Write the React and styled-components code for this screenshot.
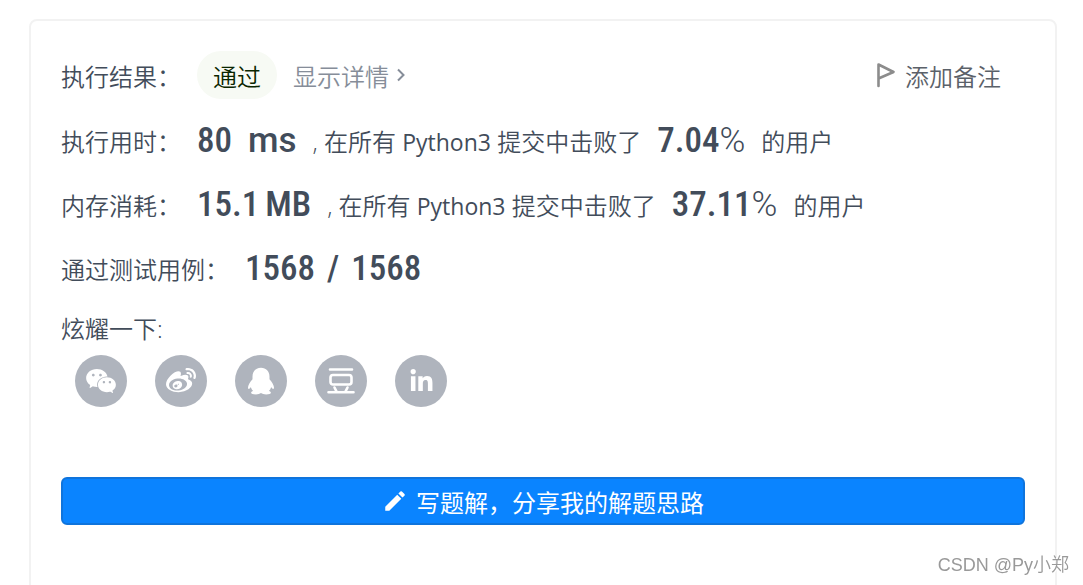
import React from "react";
import styled, { createGlobalStyle } from "styled-components";
import { AiFillWechat } from "react-icons/ai";
import { FaWeibo, FaLinkedinIn } from "react-icons/fa";
import { MdEdit } from "react-icons/md";

const GlobalStyle = createGlobalStyle`
    * {
        box-sizing: border-box;
    }

    body {
        margin: 0;
        background: #fff;
        color: #424c5a;
        font-family: "Open Sans", "Noto Sans CJK SC", sans-serif;
        font-size: 24px;
        font-weight: 350;
        overflow: hidden;
    }
`

const Card = styled.main`
    margin: 19px 26px 0 29px;
    padding: 30px 30px 80px;
    border: 2px solid #f2f2f2;
    border-radius: 8px;
`

const Header = styled.div`
    display: flex;
    align-items: center;
    height: 48px;
    margin-bottom: 11px;
`

const Label = styled.span`
    margin-right: 16px;
`

const Status = styled.span`
    padding: 4px 16px 0;
    border-radius: 24px;
    background: #f7faf4;
    color: #0a2600;
    line-height: 44px;
`

const DetailLink = styled.a`
    display: flex;
    align-items: center;
    gap: 8px;
    margin-left: 16px;
    color: #868d99;
    text-decoration: none;
`

const NoteButton = styled.button`
    display: flex;
    align-items: center;
    gap: 8px;
    margin-left: auto;
    padding: 0 24px 0 0;
    border: 0;
    background: none;
    color: #5b6169;
    font: inherit;
    cursor: pointer;
`

const Row = styled.p`
    display: flex;
    align-items: center;
    height: 64px;
    margin: 0;
    line-height: 64px;
    white-space: nowrap;
`

const Value = styled.strong`
    display: flex;
    gap: ${props => props.$gap || 0}px;
    margin-right: 16px;
    padding-bottom: 2px;
    font-family: "Roboto Condensed", Roboto, sans-serif;
    font-size: 35px;
    font-weight: 500;
`

const Unit = styled.span`
    font-family: ${props => props.$wide ? "Roboto, sans-serif" : "inherit"};
`

const Percent = styled.span`
    font-family: Roboto, sans-serif;
    font-weight: 300;
`

const Text = styled.span`
    margin-right: 16px;
`

const Language = styled.span`
    font-size: 23px;
    font-weight: 400;
`

const ShareTitle = styled.p`
    margin: 9px 0 8px;
    line-height: 36px;
`

const ShareList = styled.div`
    display: flex;
    gap: 28px;
    margin: 0 14px 70px;
`

const ShareLink = styled.a`
    display: flex;
    align-items: center;
    justify-content: center;
    width: 52px;
    height: 52px;
    border-radius: 50%;
    background: #afb4bd;
    color: #fff;
`

const WriteButton = styled.button`
    display: flex;
    align-items: center;
    justify-content: center;
    gap: 8px;
    width: 100%;
    height: 48px;
    border: 2px solid #0f74dc;
    border-radius: 6px;
    background: #0a84ff;
    color: #fff;
    font: inherit;
    font-weight: 400;
    cursor: pointer;
`

const Watermark = styled.span`
    position: fixed;
    right: 14px;
    bottom: 6px;
    color: #999;
    font-family: "Liberation Sans", "Noto Sans CJK SC", sans-serif;
    font-size: 18px;
    line-height: 28px;
    text-shadow: 1px 1px 0 #fff;
`

const ChevronIcon = () => (
    <svg width="8" height="14" viewBox="0 0 8 14" fill="none" stroke="currentColor" strokeWidth="2" aria-hidden="true">
        <path d="M1 1.5 6.5 7 1 12.5" />
    </svg>
)

const FlagIcon = () => (
    <svg width="20" height="26" viewBox="0 0 20 26" fill="none" stroke="#8c8c8c" strokeWidth="2.6" strokeLinejoin="round" strokeLinecap="round" aria-hidden="true">
        <path d="M1.5 24V2.5L16.5 10 1.5 16.5" />
    </svg>
)

const QqIcon = () => (
    <svg width="28" height="28" viewBox="0 0 28 28" fill="currentColor" aria-hidden="true">
        <path d="M14 .8c-5.2 0-8.5 3.8-8.5 8.6v2.8C3.2 14.7 1 18.3 1 20.6c0 .9.3 1.5.8 1.4.8-.1 1.5-1.1 2-2 .4 1.6 1.2 2.9 2.3 4-1.3.4-2 1-2 1.7 0 1.1 2 1.7 4.7 1.7 2.3 0 4-.5 5.2-1.3 1.2.8 2.9 1.3 5.2 1.3 2.7 0 4.7-.6 4.7-1.7 0-.7-.7-1.3-2-1.7 1.1-1.1 1.9-2.4 2.3-4 .5.9 1.2 1.9 2 2 .5.1.8-.5.8-1.4 0-2.3-2.2-5.9-4.5-8.4V9.4C22.5 4.6 19.2.8 14 .8Z" />
    </svg>
)

const DoubanIcon = () => (
    <svg width="28" height="28" viewBox="0 0 28 28" fill="none" stroke="currentColor" strokeWidth="2.6" strokeLinecap="round" aria-hidden="true">
        <path d="M3 2.5h22M1.5 25.2h25M7.5 20.5l2 4M20.5 20.5l-2 4" />
        <rect x="3.5" y="8" width="21" height="9.5" rx="2.5" />
    </svg>
)

const shares = [
    { name: "微信", icon: <AiFillWechat size={34} /> },
    { name: "微博", icon: <FaWeibo size={30} /> },
    { name: "QQ", icon: <QqIcon /> },
    { name: "豆瓣", icon: <DoubanIcon /> },
    { name: "LinkedIn", icon: <FaLinkedinIn size={25} /> },
]

const Beat = ({ label, value, unit, wide, percent }) => (
    <Row>
        <Label>{label}</Label>
        <Value $gap={wide ? 16 : 6}>
            <span>{value}</span>
            <Unit $wide={wide}>{unit}</Unit>
        </Value>
        <Text>, 在所有 <Language>Python3</Language> 提交中击败了</Text>
        <Value>{percent}<Percent>%</Percent></Value>
        <Text>的用户</Text>
    </Row>
)

export default function App() {
    return (
        <>
            <GlobalStyle />
            <Card>
                <Header>
                    <Label>执行结果：</Label>
                    <Status>通过</Status>
                    <DetailLink href="#detail">显示详情<ChevronIcon /></DetailLink>
                    <NoteButton type="button"><FlagIcon />添加备注</NoteButton>
                </Header>
                <Beat label="执行用时：" value="80" unit="ms" wide percent="7.04" />
                <Beat label="内存消耗：" value="15.1" unit="MB" percent="37.11" />
                <Row>
                    <Label>通过测试用例：</Label>
                    <Value $gap={12}>
                        <span>1568</span>
                        <span>/</span>
                        <span>1568</span>
                    </Value>
                </Row>
                <ShareTitle>炫耀一下:</ShareTitle>
                <ShareList>
                    {shares.map(({ name, icon }) => (
                        <ShareLink key={name} href="#share" aria-label={name}>{icon}</ShareLink>
                    ))}
                </ShareList>
                <WriteButton type="button"><MdEdit size={26} />写题解，分享我的解题思路</WriteButton>
            </Card>
            <Watermark>CSDN @Py小郑</Watermark>
        </>
    );
}
